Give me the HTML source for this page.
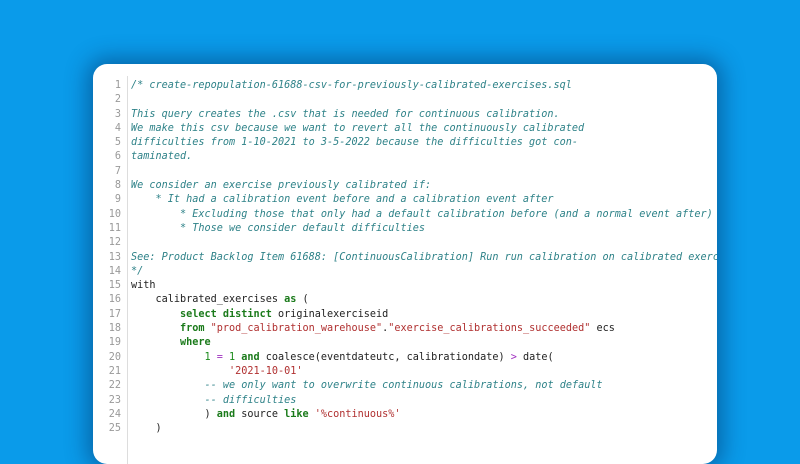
<!DOCTYPE html>
<html><head><style>
html,body{margin:0;padding:0;width:800px;height:430px;overflow:hidden;background:#0a9bea;}
.card{position:absolute;left:93px;top:64px;width:624px;height:400px;background:#fff;border-radius:14px;box-shadow:0 0 22px 6px rgba(0,40,90,0.45);overflow:hidden;}
.code{position:absolute;left:0;top:15px;font-family:"DejaVu Sans Mono","Liberation Mono",monospace;font-size:10.18px;line-height:14.3px;white-space:pre;}
.ln{position:absolute;left:0;width:28px;text-align:right;color:#999;}
.tx{position:absolute;left:38px;color:#222;}
.gut{position:absolute;left:34px;top:12px;width:1px;height:400px;background:#ddd;}
.c{color:#2e8288;font-style:italic;}
.k{color:#1a7a1a;font-weight:bold;}
.s{color:#b03030;}
.n{color:#1a8a1a;}
.o{color:#a030c0;}
</style></head><body>
<div class="card">
<div class="gut"></div>
<div class="code"><div class="ln">1
2
3
4
5
6
7
8
9
10
11
12
13
14
15
16
17
18
19
20
21
22
23
24
25</div><div class="tx"><span class="c">/* create-repopulation-61688-csv-for-previously-calibrated-exercises.sql

This query creates the .csv that is needed for continuous calibration.
We make this csv because we want to revert all the continuously calibrated
difficulties from 1-10-2021 to 3-5-2022 because the difficulties got con-
taminated.

We consider an exercise previously calibrated if:
    * It had a calibration event before and a calibration event after
        * Excluding those that only had a default calibration before (and a normal event after)
        * Those we consider default difficulties

See: Product Backlog Item 61688: [ContinuousCalibration] Run run calibration on calibrated exercises
*/</span>
with
    calibrated_exercises <span class="k">as</span> (
        <span class="k">select distinct</span> originalexerciseid
        <span class="k">from</span> <span class="s">"prod_calibration_warehouse"</span>.<span class="s">"exercise_calibrations_succeeded"</span> ecs
        <span class="k">where</span>
            <span class="n">1</span> <span class="o">=</span> <span class="n">1</span> <span class="k">and</span> coalesce(eventdateutc, calibrationdate) <span class="o">&gt;</span> date(
                <span class="s">'2021-10-01'</span>
            <span class="c">-- we only want to overwrite continuous calibrations, not default</span>
            <span class="c">-- difficulties</span>
            ) <span class="k">and</span> source <span class="k">like</span> <span class="s">'%continuous%'</span>
    )</div></div>
</div>
</body></html>
